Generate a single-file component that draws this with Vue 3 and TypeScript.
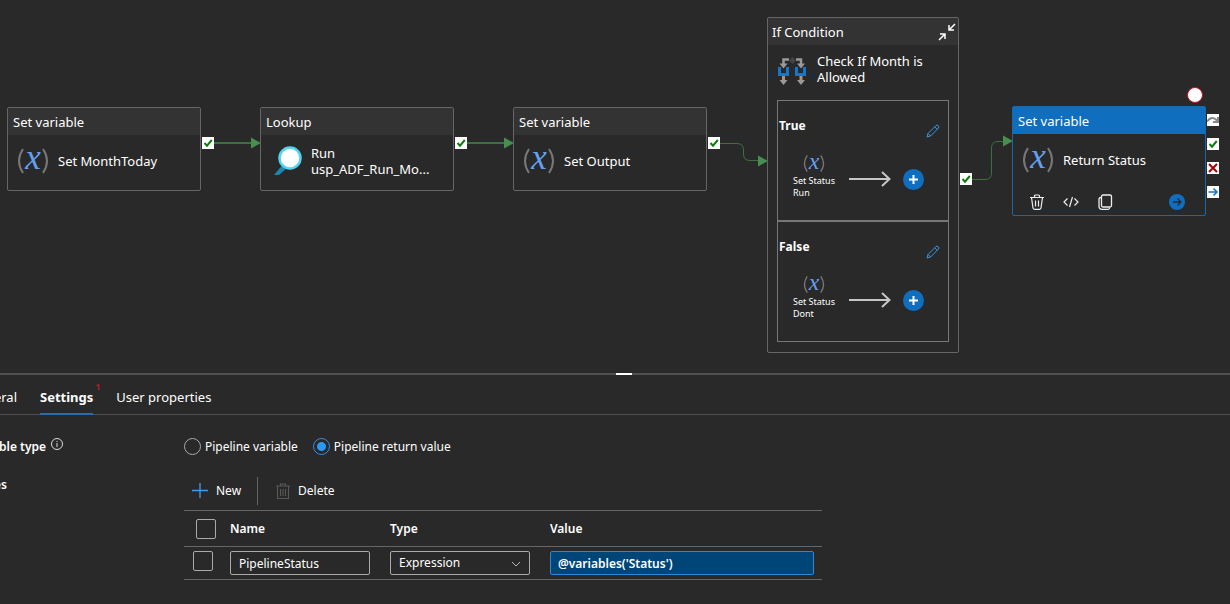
<script setup lang="ts">
import { ref } from 'vue'

interface Activity {
  id: string
  type: string
  lines: string[]
  icon: 'variable' | 'lookup'
}

const activities: Activity[] = [
  { id: 'month', type: 'Set variable', lines: ['Set MonthToday'], icon: 'variable' },
  { id: 'lookup', type: 'Lookup', lines: ['Run', 'usp_ADF_Run_Mo...'], icon: 'lookup' },
  { id: 'output', type: 'Set variable', lines: ['Set Output'], icon: 'variable' },
]

const branches = [
  { id: 'true', label: 'True', step: ['Set Status', 'Run'] },
  { id: 'false', label: 'False', step: ['Set Status', 'Dont'] },
]

const variableType = ref('return')
const allSelected = ref(false)
const rowSelected = ref(false)
const name = ref('PipelineStatus')
const type = ref('Expression')
const value = ref("@variables('Status')")
</script>

<template>
  <div class="page">
    <main class="canvas">
      <svg class="links" aria-hidden="true">
        <g class="wire">
          <path d="M214 143H252" stroke-width="2" />
          <path d="M467 143H505" stroke-width="2" />
          <path d="M720 143.500H737Q743.500 143.500 743.500 150V154Q743.500 160.500 750 160.500H760" />
          <path d="M972 179.500H985Q991.500 179.500 991.500 173V148Q991.500 141.500 998 141.500H1004" />
        </g>
        <g class="head">
          <path d="M251 137.500L261 143L251 148.500Z" />
          <path d="M504 137.500L514 143L504 148.500Z" />
          <path d="M758 155.500L768 161L758 166.500Z" />
          <path d="M1003 135.500L1013 141L1003 146.500Z" />
        </g>
      </svg>

      <article v-for="a in activities" :key="a.id" class="node" :class="'at-' + a.id">
        <header class="node-head">{{ a.type }}</header>
        <div class="node-body">
          <svg v-if="a.icon === 'variable'" class="var-icon" viewBox="0 0 32 28">
            <path class="paren" d="M6 2Q-2 14 6 26M26 2Q34 14 26 26" />
            <text class="var-x" x="16" y="22" text-anchor="middle">x</text>
          </svg>
          <svg v-else class="lookup-icon" viewBox="0 0 30 32">
            <path d="M10 18L14 22L5 30H0Z" fill="#1f85ad" />
            <circle cx="16" cy="13" r="10.500" fill="#fff" stroke="#4fd5ee" stroke-width="2.500" />
          </svg>
          <div class="node-name">
            <div v-for="l in a.lines" :key="l">{{ l }}</div>
          </div>
        </div>
        <span class="port out"><svg viewBox="0 0 12 12"><path d="M2.500 6L5 8.700L9.800 3" stroke="#107c10" /></svg></span>
      </article>

      <article class="node condition">
        <header class="node-head">
          If Condition
          <button class="plain" aria-label="Collapse">
            <svg width="18" height="18" viewBox="0 0 18 18" fill="none" stroke="#fff" stroke-width="1.500">
              <path d="M17 1L11.500 6.500M11 2V7H16M1 17L6.500 11.500M2 11H7V16" />
            </svg>
          </button>
        </header>
        <div class="condition-title">
          <svg width="30" height="30" viewBox="0 0 30 30">
            <path d="M15.500 0L19 3.500L15.500 7L12 3.500Z" fill="#444" />
            <path d="M6.500 8V2.500H12M19 2.500H24V8" fill="none" stroke="#999" stroke-width="2.500" />
            <path d="M2.500 6.500H10.500L6.500 11.500ZM20 6.500H28L24 11.500Z" fill="#999" />
            <path d="M2.500 10V17.500H10.500V10M19.500 10V17.500H27.500V10" fill="none" stroke="#0f78d0" stroke-width="3" />
            <path d="M5 19H8V23H10.500L6.500 28L2.500 23H5ZM22.500 19H25.500V23H28L24 28L20 23H22.500Z" fill="#999" />
          </svg>
          <div>Check If Month is<br />Allowed</div>
        </div>
        <section v-for="b in branches" :key="b.id" class="branch">
          <div class="branch-head">
            <strong>{{ b.label }}</strong>
            <button class="plain" :aria-label="'Edit ' + b.label">
              <svg width="14" height="14" viewBox="0 0 14 14" fill="none" stroke="#3b96dd" stroke-width="1">
                <path d="M1 13L2 9.500L10 1.500Q11 .500 12.300 1.700Q13.500 3 12.500 4L4.500 12ZM8.700 2.800L11.200 5.300M2 9.500L4.500 12" />
              </svg>
            </button>
          </div>
          <div class="branch-flow">
            <div class="step">
              <svg class="var-icon small" viewBox="0 0 32 28">
                <path class="paren" d="M6 2Q-2 14 6 26M26 2Q34 14 26 26" />
                <text class="var-x" x="16" y="22" text-anchor="middle">x</text>
              </svg>
              <div v-for="s in b.step" :key="s">{{ s }}</div>
            </div>
            <svg class="long-arrow" width="42" height="16" viewBox="0 0 42 16" fill="none" stroke="#c8c6c4" stroke-width="2">
              <path d="M0 8H40M33 1L40.500 8L33 15" />
            </svg>
            <button class="plain add" :aria-label="'Add activity to ' + b.label">
              <svg width="21" height="21" viewBox="0 0 21 21">
                <circle cx="10.500" cy="10.500" r="10.500" fill="#106ebe" />
                <path d="M10.500 6V15M6 10.500H15" stroke="#fff" stroke-width="2" />
              </svg>
            </button>
          </div>
        </section>
        <span class="port out-condition"><svg viewBox="0 0 12 12"><path d="M2.500 6L5 8.700L9.800 3" stroke="#107c10" /></svg></span>
      </article>

      <article class="node selected">
        <header class="node-head">Set variable</header>
        <div class="node-body">
          <svg class="var-icon" viewBox="0 0 32 28">
            <path class="paren" d="M6 2Q-2 14 6 26M26 2Q34 14 26 26" />
            <text class="var-x" x="16" y="22" text-anchor="middle">x</text>
          </svg>
          <div class="node-name">Return Status</div>
        </div>
        <div class="actions">
          <button class="plain" aria-label="Delete activity">
            <svg width="16" height="16" viewBox="0 0 16 16" fill="none" stroke="#eee" stroke-width="1.200">
              <path d="M1 3.500H15M5.500 3.500V2Q5.500 1 6.500 1H9.500Q10.500 1 10.500 2V3.500M2.500 3.500L4 14Q4.200 15.300 5.500 15.300H10.500Q11.800 15.300 12 14L13.500 3.500M6.500 6.500V12.500M9.500 6.500V12.500" />
            </svg>
          </button>
          <button class="plain" aria-label="View code">
            <svg width="16" height="16" viewBox="0 0 16 16" fill="none" stroke="#eee" stroke-width="1.200">
              <path d="M4.500 4.500L1 8L4.500 11.500M11.500 4.500L15 8L11.500 11.500M9.500 3L6.500 13" />
            </svg>
          </button>
          <button class="plain" aria-label="Clone">
            <svg width="16" height="16" viewBox="0 0 16 16" fill="none" stroke="#eee" stroke-width="1.300">
              <rect x="4.500" y="1" width="10" height="12" rx="1.500" />
              <path d="M4 3.500Q2 3.500 2 5.500V12Q2 15.300 5 15.300H11Q12.500 15.300 12.800 13.500" />
            </svg>
          </button>
          <button class="plain next" aria-label="Add output">
            <svg width="16" height="16" viewBox="0 0 16 16">
              <circle cx="8" cy="8" r="8" fill="#106ebe" />
              <path d="M4 8H12M8.500 4.500L12 8L8.500 11.500" fill="none" stroke="#24292e" stroke-width="1.300" />
            </svg>
          </button>
        </div>
        <div class="ports">
          <span class="port"><svg viewBox="0 0 12 12"><path d="M0 7.500Q5 1 10 6.500M11 3V8H6" stroke="#8a8886" /></svg></span>
          <span class="port"><svg viewBox="0 0 12 12"><path d="M2.500 6L5 8.700L9.800 3" stroke="#107c10" /></svg></span>
          <span class="port"><svg viewBox="0 0 12 12"><path d="M2 2L10 10M10 2L2 10" stroke="#a80000" /></svg></span>
          <span class="port"><svg viewBox="0 0 12 12"><path d="M1.500 6H10M6.500 2.500L10 6L6.500 9.500" stroke="#1674cb" stroke-width="1.600" /></svg></span>
        </div>
        <span class="breakpoint"></span>
      </article>
    </main>

    <section class="panel">
      <div class="grip"></div>
      <nav class="tabs">
        <button class="tab first">eral</button>
        <button class="tab active">Settings<sup>1</sup></button>
        <button class="tab">User properties</button>
      </nav>

      <div class="form">
        <div class="row">
          <div class="label type-label">
            <span id="type-label">ble type</span>
            <svg width="12" height="12" viewBox="0 0 12 12" fill="none" stroke="#ddd">
              <circle cx="6" cy="6" r="5.500" /><path d="M6 5V9M6 3V4" />
            </svg>
          </div>
          <div class="radios" role="radiogroup" aria-labelledby="type-label">
            <label><input v-model="variableType" type="radio" value="variable" />Pipeline variable</label>
            <label><input v-model="variableType" type="radio" value="return" />Pipeline return value</label>
          </div>
        </div>

        <div class="row">
          <div class="label values-label"><span>es</span></div>
          <div class="values">
            <div class="toolbar">
              <button class="plain tool">
                <svg width="16" height="16" viewBox="0 0 16 16" stroke="#4398f0" stroke-width="1.300"><path d="M8 0V15M0 7.500H16" /></svg>
                New
              </button>
              <button class="plain tool remove">
                <svg width="14" height="17" viewBox="0 0 14 17" fill="none" stroke="#5a5958" stroke-width="1.100">
                  <path d="M0 3H14M4.500 3V1H9.500V3M1.500 3V15.500H12.500V3M4.500 6V13M7 6V13M9.500 6V13" />
                </svg>
                Delete
              </button>
            </div>
            <table>
              <thead>
                <tr>
                  <th class="pick head-pick"><input v-model="allSelected" type="checkbox" aria-label="Select all" /></th>
                  <th class="mid">Name</th>
                  <th class="mid">Type</th>
                  <th>Value</th>
                </tr>
              </thead>
              <tbody>
                <tr>
                  <td class="pick"><input v-model="rowSelected" type="checkbox" aria-label="Select row" /></td>
                  <td><input v-model="name" class="field" type="text" aria-label="Name" /></td>
                  <td>
                    <div class="drop">
                      <select v-model="type" class="field" aria-label="Type"><option>Expression</option></select>
                      <svg width="10" height="6" viewBox="0 0 10 6" fill="none" stroke="#bbb"><path d="M1 1L5 5L9 1" /></svg>
                    </div>
                  </td>
                  <td><input v-model="value" class="field expression" type="text" aria-label="Value" /></td>
                </tr>
              </tbody>
            </table>
          </div>
        </div>
      </div>
    </section>
  </div>
</template>

<style>
body {
  background: #292929;
}
</style>

<style scoped>
* {
  box-sizing: border-box;
}
.page {
  min-height: 100vh;
  display: flex;
  flex-direction: column;
  overflow: hidden;
  background: #292929;
  color: #fff;
  font: 13px/16px "Segoe UI", "Noto Sans", "Open Sans", sans-serif;
}
button,
input,
select {
  font: inherit;
  color: inherit;
}
svg {
  display: block;
  flex: none;
}
.plain {
  border: 0;
  padding: 0;
  background: none;
  cursor: pointer;
}

/* Pipeline canvas */
.canvas {
  position: relative;
  flex: 1;
  min-height: 360px;
}
.links {
  position: absolute;
  inset: 0;
  width: 100%;
  height: 100%;
}
.wire {
  fill: none;
  stroke: #3b7041;
}
.head {
  fill: #468f4f;
}
.node {
  position: absolute;
  top: 107px;
  width: 194px;
  height: 84px;
  border: 1px solid #666;
  border-radius: 2px;
  background: #292929;
}
.at-month { left: 7px; }
.at-lookup { left: 260px; }
.at-output { left: 513px; }
.node-head {
  display: flex;
  align-items: center;
  justify-content: space-between;
  height: 27px;
  padding: 0 2px 0 5px;
  background: #333;
}
.node-body {
  display: flex;
  align-items: center;
  gap: 9px;
  height: 52px;
  padding-left: 9px;
}
.var-icon {
  width: 32px;
  height: 28px;
  overflow: visible;
}
.var-icon.small {
  width: 22px;
  height: 19px;
}
.paren {
  fill: none;
  stroke: #777;
  stroke-width: 2;
}
.var-x {
  font: italic 35px/1 "Liberation Serif", serif;
  fill: #64a0f0;
}
.lookup-icon {
  width: 30px;
  height: 32px;
  margin-left: 4px;
}
.lookup-icon + .node-name {
  margin-left: -2px;
}
.port {
  display: block;
  width: 12px;
  height: 12px;
  background: #fff;
}
.port svg {
  fill: none;
  stroke-width: 2;
}
.out {
  position: absolute;
  left: 194px;
  top: 29px;
}
.condition {
  left: 767px;
  top: 17px;
  width: 192px;
  height: 336px;
  padding-bottom: 10px;
}
.condition .node-head {
  padding-left: 4px;
}
.condition-title {
  display: flex;
  gap: 10px;
  height: 55px;
  padding: 8px 0 0 9px;
}
.condition-title svg {
  margin-top: 4px;
}
.branch {
  height: 121px;
  margin: 0 9px;
  border: 1px solid #777;
}
.branch-head {
  display: flex;
  justify-content: space-between;
  align-items: flex-start;
  height: 39px;
  padding: 17px 8px 0 1px;
  font-size: 12px;
}
.branch-head button {
  margin-top: 6px;
}
.branch-flow {
  display: flex;
  padding: 14px 0 0 15px;
  font-size: 9px;
  line-height: 12px;
}
.step {
  width: 56px;
}
.step .var-icon {
  margin: 0 0 2px 10px;
}
.long-arrow {
  margin-top: 17px;
}
.add {
  height: 21px;
  margin: 15px 0 0 12px;
}
.out-condition {
  position: absolute;
  left: 192px;
  top: 155px;
}
.selected {
  left: 1012px;
  top: 106px;
  height: 110px;
  border-color: #1769ae;
}
.selected .node-head {
  background: #106ebe;
}
.actions {
  display: flex;
  gap: 18px;
  padding: 8px 20px 0 16px;
}
.next {
  margin-left: auto;
}
.ports {
  position: absolute;
  left: 194px;
  top: 7px;
  display: grid;
  gap: 12px;
}
.breakpoint {
  position: absolute;
  right: 2px;
  top: -20px;
  width: 16px;
  height: 16px;
  border: 1px solid #c50f1f;
  border-radius: 50%;
  background: #fff;
}

/* Properties panel */
.panel {
  border-top: 2px solid #505050;
  padding-bottom: 24px;
}
.grip {
  width: 16px;
  height: 2px;
  margin: -2px auto 0;
  background: #fff;
  position: relative;
  left: 9px;
}
.tabs {
  display: flex;
  gap: 23px;
  height: 40px;
  border-bottom: 1px solid #505050;
}
.tab {
  position: relative;
  height: 40px;
  padding: 5px 0 0;
  border: 0;
  border-bottom: 2px solid transparent;
  background: none;
  white-space: nowrap;
}
.tab.first {
  display: flex;
  justify-content: flex-end;
  align-items: center;
  width: 17px;
}
.tab.active {
  border-color: #2b6ca8;
  font-weight: 700;
}
.tab sup {
  position: absolute;
  left: 100%;
  top: 4px;
  margin-left: 2px;
  color: #b3202c;
  font-size: 9px;
}
.form {
  display: grid;
  gap: 22px;
  padding-top: 23px;
  font-size: 12px;
}
.row {
  display: grid;
  grid-template-columns: 184px minmax(0, 1fr);
}
.label {
  display: flex;
  font-weight: 600;
  white-space: nowrap;
}
.label span {
  display: flex;
  justify-content: flex-end;
}
.type-label {
  height: 17px;
}
.type-label span {
  width: 46px;
  padding-top: 1px;
}
.type-label svg {
  margin-left: 5px;
}
.values-label span {
  width: 7px;
}
.radios {
  display: flex;
  gap: 15px;
}
.radios label {
  display: flex;
  align-items: center;
  gap: 4px;
}
input[type="radio"] {
  appearance: none;
  width: 17px;
  height: 17px;
  margin: 0;
  border: 1px solid #aaa;
  border-radius: 50%;
}
input[type="radio"]:checked {
  border-color: #3b8fdc;
  background: radial-gradient(circle, #2899f5 4px, transparent 5px);
}
.values {
  max-width: 638px;
}
.toolbar {
  display: flex;
  align-items: flex-start;
  height: 33px;
}
.tool {
  display: flex;
  align-items: center;
  gap: 8px;
  height: 28px;
  padding: 0 16px 0 8px;
}
.remove {
  padding-left: 18px;
  border-left: 1px solid #666;
}
table {
  width: 100%;
  border-collapse: collapse;
  table-layout: fixed;
  border-top: 1px solid #666;
}
tr {
  border-bottom: 1px solid #666;
}
th,
td {
  padding: 0;
  text-align: left;
}
th {
  height: 36px;
  font-weight: 600;
}
td {
  height: 33px;
  padding-top: 4px;
  vertical-align: top;
}
.pick {
  width: 46px;
  padding-left: 9px;
}
.head-pick {
  padding-left: 12px;
}
.mid {
  width: 160px;
}
input[type="checkbox"] {
  appearance: none;
  display: block;
  width: 20px;
  height: 20px;
  margin: 0;
  border: 1px solid #aaa;
  border-radius: 2px;
}
input[type="checkbox"]:checked {
  background: #106ebe;
}
.field {
  appearance: none;
  display: block;
  width: 140px;
  height: 24px;
  padding: 0 8px;
  border: 1px solid #aaa;
  border-radius: 2px;
  background: #292929;
}
.drop {
  position: relative;
  width: 140px;
}
.drop svg {
  position: absolute;
  right: 9px;
  top: 10px;
  pointer-events: none;
}
.expression {
  width: calc(100% - 8px);
  padding: 0 7px;
  border-color: #2b88d8;
  background: #004578;
  font-weight: 600;
}
</style>
